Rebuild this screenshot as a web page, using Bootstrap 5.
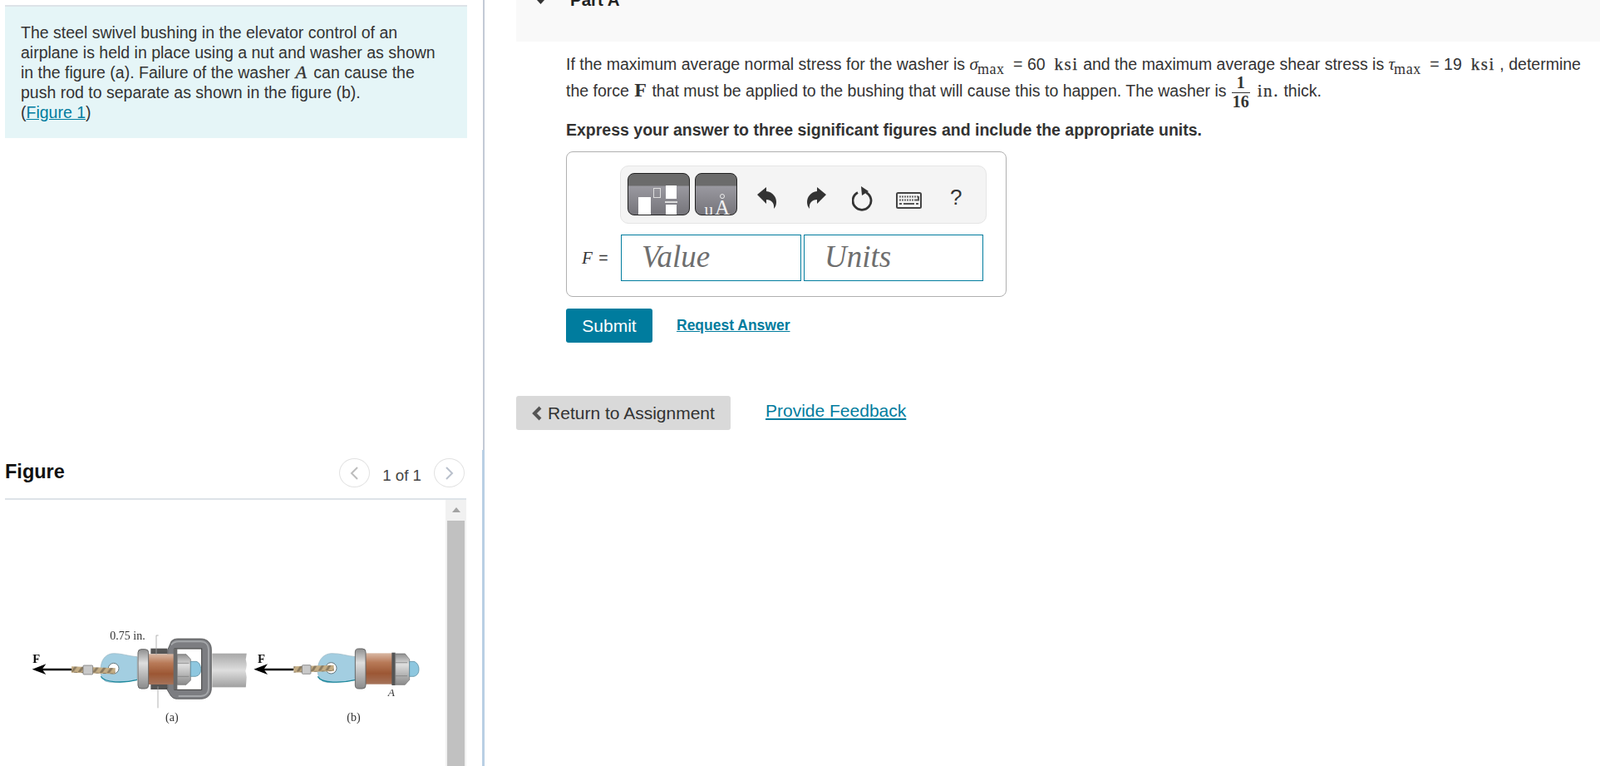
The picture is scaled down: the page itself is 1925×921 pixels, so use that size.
<!DOCTYPE html>
<html lang="en"><head><meta charset="utf-8"><title>Part A</title>
<link href="https://cdn.jsdelivr.net/npm/bootstrap@5.3.0/dist/css/bootstrap.min.css" rel="stylesheet">
<style>
html,body{height:921px;overflow:hidden}
body{font-family:"Liberation Sans",Arial,sans-serif;font-size:19.5px;line-height:24px;color:#333;background:#fff}
a{color:#007c9e}
.shell{height:921px}
.side{width:583px;flex:none}
.side-top{height:541px;border-right:2px solid #c3cad6;padding:6px 19px 0 6px}
.side-bot{height:380px;border-right:3px solid #b9cfe4;padding:0 19px 0 6px}
.intro{height:160px;background:#e5f5f7;border-top:2px solid #dde3e8;padding:19px 20px 0 19px}
.mi{font-family:"Liberation Serif",serif;font-style:italic}
.mr{font-family:"Liberation Serif",serif;font-size:21px;letter-spacing:1.6px;-webkit-text-stroke:.25px #333}
.mb{font-family:"Liberation Serif",serif;font-weight:700;font-size:24px;line-height:0;margin:0 1px}
.fig-head{height:60px;padding-top:10px;border-bottom:2px solid #dde3e8}
.fig-title{font-size:23.5px;font-weight:700;color:#111;line-height:26px;padding-top:3px}
.pager{font-size:18.7px;color:#444;gap:15px;margin-right:2px}
.round{width:37px;height:35px;border:1px solid #e2e2e2;border-radius:50%;display:flex;align-items:center;justify-content:center}
.pg-text{padding-top:9px}
.fig-body{height:320px}
.fig-canvas{width:530px}
.fig-svg{display:block;margin-top:137px;margin-left:14px;width:520px;height:150px}
.sbar{width:25px;flex:none;background:#f1f1f1}
.sbar-up{height:25px}
.sbar-thumb{background:#c1c1c1;margin:0 2px}
.main{flex:1;min-width:0;padding-left:38px}
.part-bar{height:50px;background:#f9f9f9;overflow:hidden;position:relative}
.part-lab{position:absolute;left:65px;top:-12px;font-weight:700;font-size:20.5px;color:#222}
.caret{position:absolute;left:24px;top:0}
.qbody{padding-left:60px}
.q1{margin-top:11px;line-height:32px;white-space:nowrap;width:1300px;height:64px}
.q2{font-weight:700;margin-top:19px;line-height:24px}
.sgm{font-size:21px}
.sub{position:relative;top:5px;font-size:18px;line-height:0;font-family:"Liberation Serif",serif;letter-spacing:.6px;margin-left:-1px;margin-right:5px}
.frac{display:inline-flex;flex-direction:column;align-items:center;vertical-align:middle;line-height:21px;font-family:"Liberation Serif",serif;font-size:20px;font-weight:700;margin:-11px 9px -11px 6px;color:#333}
.frac b{border-bottom:1px solid #333;padding:0 0 1px;width:22px;text-align:center}
.answer{width:530px;height:175px;margin-top:14px;border:1px solid #b0b0b0;border-radius:8px;padding:16px 0 0 64px}
.tools{width:441px;height:70px;background:#f4f4f4;border:1px solid #e5e5e5;border-radius:10px;padding:8px 8px;gap:6px}
.tpl{height:51px;border:1px solid #222;border-radius:8px;background:linear-gradient(#6b6b6b 0,#6b6b6b 14px,#9a99a0 15px,#75747a 100%);overflow:hidden;position:relative}
.tpl1{width:75px}.tpl2{width:51px}
.tb{position:absolute;background:#fff}
.tb-o{position:absolute;border:1.5px solid #ddd}
.ring{position:absolute;left:29px;top:24px;width:6px;height:6px;border:1px solid #eee;border-radius:50%}
.ico{position:absolute;top:0}
.tools-wrap{position:relative}
.unit{position:absolute;color:#f2f2f2;font-family:"Liberation Serif",serif;line-height:1}
.qm{position:absolute;font-size:26px;color:#333;left:397px;top:26px}
.eqrow{margin-top:13px;margin-left:-64px;gap:3px}
.eqlab{width:62px;padding-top:16px;padding-left:18px;font-size:19.5px;color:#333;white-space:nowrap}
.eqlab i{font-family:"Liberation Serif",serif;font-size:21px;margin-right:2px}
.box{height:56px;border:1px solid #007c9e;font-family:"Liberation Serif",serif;font-style:italic;font-size:37px;color:#6e6e6e;line-height:52px;padding-left:24px}
.box1{width:217px}.box2{width:216px}
.actions{margin-top:14px;gap:29px}
.btn-go{background:#007c9e;color:#fff;width:104px;height:41px;border:0;border-radius:3px;font-size:21px;padding:0;line-height:39px}
.btn-go:hover{background:#007c9e;color:#fff}
.req{font-weight:700;font-size:17.500px;margin-top:-2px}
.foot{margin-top:64px;gap:42px}
.btn-back{background:#d9d9d9;color:#333;width:258px;height:41px;border:0;border-radius:3px;font-size:21px;padding:0;line-height:38px}
.btn-back:hover{background:#d9d9d9;color:#333}
.fb{font-size:21px;margin-top:-6px}
.intro-a{font-size:22px;-webkit-text-stroke:.35px #333;margin:0 3px 0 1px}
</style></head><body>
<div class="shell d-flex">
  <div class="side">
    <div class="side-top">
      <div class="intro">The steel swivel bushing in the elevator control of an airplane is held in place using a nut and washer as shown in the figure (a). Failure of the washer <span class="mi intro-a">A</span> can cause the push rod to separate as shown in the figure (b).<br>(<a href="#">Figure 1</a>)</div>
    </div>
    <div class="side-bot">
    <div class="fig-head d-flex justify-content-between">
      <div class="fig-title">Figure</div>
      <div class="pager d-flex align-items-start">
        <span class="round"><svg width="13" height="20" viewBox="0 0 13 20"><path d="M10 3 3 10l7 7" fill="none" stroke="#bdbdbd" stroke-width="2"/></svg></span>
        <span class="pg-text">1 of 1</span>
        <span class="round"><svg width="13" height="20" viewBox="0 0 13 20"><path d="M3 3l7 7-7 7" fill="none" stroke="#b9c0cc" stroke-width="2"/></svg></span>
      </div>
    </div>
    <div class="fig-body d-flex">
      <div class="fig-canvas flex-grow-1">
        <svg class="fig-svg" viewBox="0 0 1560 450" xmlns="http://www.w3.org/2000/svg">
          <defs>
            <filter id="soft" x="-5%" y="-5%" width="110%" height="110%"><feGaussianBlur stdDeviation="1.400"/></filter>
            <linearGradient id="cu" x1="0" y1="0" x2="0" y2="1"><stop offset="0" stop-color="#d9b8a4"/><stop offset=".3" stop-color="#b87a58"/><stop offset=".65" stop-color="#9c5734"/><stop offset="1" stop-color="#a5735a"/></linearGradient>
            <linearGradient id="st" x1="0" y1="0" x2="0" y2="1"><stop offset="0" stop-color="#8f8f8f"/><stop offset=".35" stop-color="#dedede"/><stop offset="1" stop-color="#8a8a8a"/></linearGradient>
            <linearGradient id="rod" x1="0" y1="0" x2="0" y2="1"><stop offset="0" stop-color="#a8a8a8"/><stop offset=".5" stop-color="#dedede"/><stop offset="1" stop-color="#a0a0a0"/></linearGradient>
            <pattern id="twist" width="26" height="22" patternUnits="userSpaceOnUse" patternTransform="translate(0 -11)">
              <rect width="26" height="22" fill="#8a7a60"/>
              <path d="M-4 24 14-2h16L12 24Z" fill="#c4ad84"/>
              <path d="M22 24 40-2h16L38 24Z" fill="#c4ad84"/>
            </pattern>
          </defs>
          <g filter="url(#soft)">
            <!-- part a -->
            <path d="M92 197H198V205H92Z" fill="#000"/>
            <path d="M56 200 106 181 92 200 106 219Z" fill="#000"/>
            <rect x="706" y="143" width="124" height="122" fill="url(#rod)"/>
            <path d="M832 140l-5 24 5 20-6 22 5 22-4 40h8V140Z" fill="#fff"/>
            <path d="M435 155C400 152 380 143 350 143 325 144 308 160 304 190 300 215 305 232 320 243 345 252 400 246 435 238Z" fill="#a3cee1" stroke="#94b2c0" stroke-width="2"/>
            <path d="M304 226C315 250 390 250 435 238" fill="none" stroke="#1f8a9e" stroke-width="4"/>
            <circle cx="350" cy="197" r="19" fill="#fff" stroke="#64767d" stroke-width="3"/>
            <rect x="198" y="190" width="158" height="22" fill="url(#twist)" transform="rotate(2 198 200)"/>
            <rect x="240" y="186" width="35" height="33" rx="3" fill="#c9c9c9" stroke="#666" stroke-width="2"/>
            <rect x="484" y="125" width="60" height="20" fill="#555"/>
            <rect x="484" y="255" width="60" height="18" fill="#555"/>
            <path d="M545 130 558 100C563 93 572 90 582 90H665C688 90 703 106 703 128V268C703 292 688 307 665 307H580C568 307 560 302 553 290L540 268H545V130Z" fill="#7b7d81" stroke="#3a3a3a" stroke-width="2"/>
            <path d="M558 112C566 102 574 100 584 100H664C682 100 693 112 693 130V268C693 286 682 297 664 297H584" fill="none" stroke="#a4a6a9" stroke-width="6"/>
            <rect x="474" y="145" width="98" height="110" fill="url(#cu)"/>
            <rect x="438" y="128" width="38" height="142" rx="12" fill="url(#st)" stroke="#666" stroke-width="3"/>
            <rect x="570" y="126" width="98" height="148" fill="#fff" stroke="#3a3a3a" stroke-width="3"/>
            <rect x="566" y="126" width="14" height="148" fill="#6a6a6a"/>
            <path d="M580 146H612L628 164V240L612 256H580Z" fill="url(#st)" stroke="#666" stroke-width="2"/>
            <path d="M580 178H622M580 226H622" stroke="#777" stroke-width="2"/>
            <path d="M628 172H648C660 175 665 188 665 200 665 214 660 222 646 226H628Z" fill="#8ec7df" stroke="#4d7e92" stroke-width="2"/>
            <path d="M512 78h-8v70M510 262V340" fill="none" stroke="#a3a3a3" stroke-width="2.500"/>
            <!-- part b -->
            <g transform="translate(840 0)">
              <path d="M50 197H160V205H50Z" fill="#000"/>
              <path d="M16 200 66 181 52 200 66 219Z" fill="#000"/>
              <path d="M384 155C350 152 330 142 295 143 270 145 252 162 247 192 244 215 250 232 264 243 290 254 345 246 384 238Z" fill="#a3cee1" stroke="#94b2c0" stroke-width="2"/>
              <path d="M247 226C260 252 335 250 384 238" fill="none" stroke="#1f8a9e" stroke-width="4"/>
              <circle cx="295" cy="196" r="20" fill="#fff" stroke="#64767d" stroke-width="3"/>
              <rect x="160" y="190" width="145" height="22" fill="url(#twist)" transform="rotate(-2 160 200)"/>
              <rect x="190" y="185" width="32" height="32" rx="3" fill="#c9c9c9" stroke="#666" stroke-width="2"/>
              <rect x="416" y="142" width="100" height="112" fill="url(#cu)"/>
              <rect x="382" y="126" width="38" height="144" rx="12" fill="url(#st)" stroke="#666" stroke-width="3"/>
              <rect x="514" y="140" width="13" height="118" fill="#555"/>
              <path d="M527 144H562L578 164V238L562 256H527Z" fill="url(#st)" stroke="#666" stroke-width="2"/>
              <path d="M527 176H570M527 224H570" stroke="#777" stroke-width="2"/>
              <path d="M578 172H594C606 176 612 188 612 200 612 214 606 222 594 226H578Z" fill="#8ec7df" stroke="#4d7e92" stroke-width="2"/>
              <text x="500" y="297" font-family="Liberation Serif" font-style="italic" font-size="40" fill="#333">A</text>
              <text x="352" y="388" font-family="Liberation Serif" font-size="42" fill="#333">(b)</text>
              <text x="30" y="176" font-family="Liberation Serif" font-weight="700" font-size="44" fill="#111">F</text>
            </g>
            <text x="337" y="94" font-family="Liberation Serif" font-size="42" fill="#333">0.75 in.</text>
            <text x="537" y="388" font-family="Liberation Serif" font-size="42" fill="#333">(a)</text>
            <text x="58" y="176" font-family="Liberation Serif" font-weight="700" font-size="44" fill="#111">F</text>
          </g>
        </svg>
      </div>
      <div class="sbar d-flex flex-column">
        <div class="sbar-up d-flex justify-content-center pt-2"><svg width="12" height="8" viewBox="0 0 12 8"><path d="M6 1l5 6H1z" fill="#a3a3a3"/></svg></div>
        <div class="sbar-thumb flex-grow-1"></div>
      </div>
    </div>
    </div>
  </div>
  <div class="main">
    <div class="part-bar"><svg class="caret" width="11" height="5" viewBox="0 0 11 5"><path d="M1 0h9L5.500 5z" fill="#333"/></svg><div class="part-lab">Part A</div></div>
    <div class="qbody">
      <div class="q1">If the maximum average normal stress for the washer is <span class="mi sgm">σ</span><span class="sub">max</span> = 60 &nbsp;<span class="mr">ksi</span> and the maximum average shear stress is <span class="mi sgm">τ</span><span class="sub">max</span> = 19 &nbsp;<span class="mr">ksi</span> , determine<br>the force <span class="mb">F</span> that must be applied to the bushing that will cause this to happen. The washer is<span class="frac"><b>1</b><span>16</span></span><span class="mr">in.</span> thick.</div>
      <div class="q2">Express your answer to three significant figures and include the appropriate units.</div>
      <div class="answer">
        <div class="tools-wrap">
          <div class="tools d-flex">
            <div class="tpl tpl1">
              <div class="tb" style="left:12px;top:28px;width:15px;height:24px"></div>
              <div class="tb-o" style="left:30px;top:17px;width:9px;height:12px"></div>
              <div class="tb" style="left:45px;top:14px;width:13px;height:16px"></div>
              <div class="tb" style="left:44px;top:33px;width:15px;height:2px;background:#ddd"></div>
              <div class="tb" style="left:45px;top:37px;width:13px;height:15px"></div>
            </div>
            <div class="tpl tpl2">
              <div class="unit" style="left:10px;top:33px;font-size:20px">µ</div>
              <div class="unit" style="left:23px;top:28px;font-size:25px">A</div>
              <div class="ring"></div>
            </div>
          </div>
          <svg class="ico" style="left:165px;top:26px" width="24" height="26" viewBox="0 0 24 26"><path d="M0 9 11 0v5c8 1 12 7 12 13 0 3-1 6-3 8 1-7-3-11-9-11v5Z" fill="#333"/></svg>
          <svg class="ico" style="left:224px;top:26px" width="24" height="26" viewBox="0 0 24 26"><path d="M24 9 13 0v5C5 6 1 12 1 18c0 3 1 6 3 8-1-7 3-11 9-11v5Z" fill="#333"/></svg>
          <svg class="ico" style="left:279px;top:25px" width="26" height="30" viewBox="0 0 26 30"><path d="M7 7.500a11 11 0 1 0 10 0" fill="none" stroke="#333" stroke-width="2.800"/><path d="M11 0l1 11 8-5z" fill="#333"/></svg>
          <svg class="ico" style="left:332px;top:32px" width="31" height="20" viewBox="0 0 31 20"><rect x="1" y="1" width="29" height="18" rx="1.500" fill="#f4f4f4" stroke="#444" stroke-width="2"/><path d="M4 5.500h23M4 9.500h20" stroke="#666" stroke-width="2" stroke-dasharray="2 1"/><path d="M24 9.500h3V5M4 14h3M9 14h13M24 14h3" stroke="#555" stroke-width="2" fill="none"/></svg>
          <div class="qm">?</div>
        </div>
        <div class="eqrow d-flex">
          <div class="eqlab"><i>F</i> =</div>
          <div class="box box1">Value</div>
          <div class="box box2">Units</div>
        </div>
      </div>
      <div class="actions d-flex align-items-center">
        <button class="btn btn-go" type="button">Submit</button>
        <a class="req" href="#">Request Answer</a>
      </div>
    </div>
    <div class="foot d-flex align-items-center">
      <button class="btn btn-back" type="button"><svg width="13" height="18" viewBox="0 0 13 18" style="margin-right:6px;vertical-align:-2px"><path d="M10 2 3 9l7 7" fill="none" stroke="#555" stroke-width="4"/></svg>Return to Assignment</button>
      <a class="fb" href="#">Provide Feedback</a>
    </div>
  </div>
</div>
<script src="https://cdn.jsdelivr.net/npm/bootstrap@5.3.0/dist/js/bootstrap.bundle.min.js"></script>
</body></html>
